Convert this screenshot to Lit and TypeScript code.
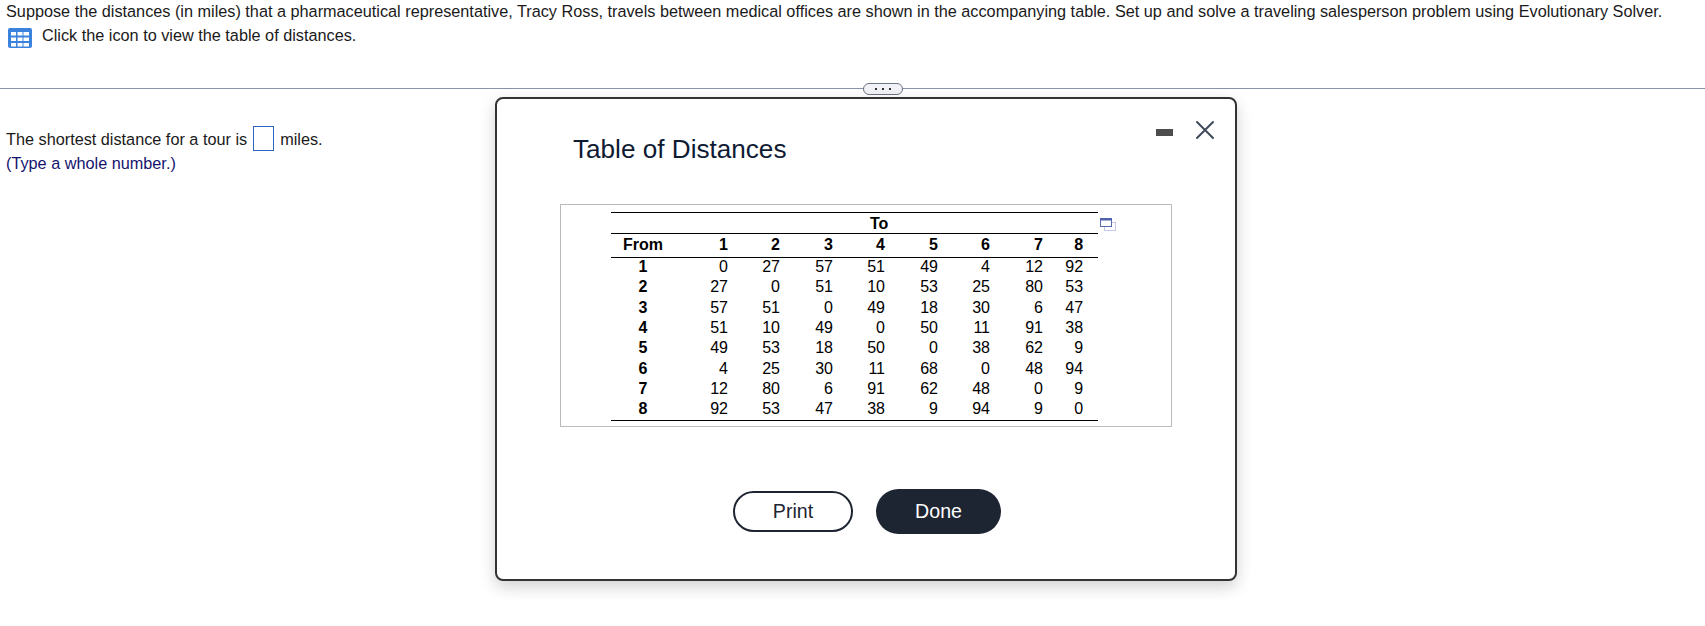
import { LitElement, html, css, svg } from "lit";
import { customElement } from "lit/decorators.js";

const DISTANCES = [
  [0, 27, 57, 51, 49, 4, 12, 92],
  [27, 0, 51, 10, 53, 25, 80, 53],
  [57, 51, 0, 49, 18, 30, 6, 47],
  [51, 10, 49, 0, 50, 11, 91, 38],
  [49, 53, 18, 50, 0, 38, 62, 9],
  [4, 25, 30, 11, 68, 0, 48, 94],
  [12, 80, 6, 91, 62, 48, 0, 9],
  [92, 53, 47, 38, 9, 94, 9, 0],
];

const tableIcon = svg`<svg width="24" height="20" viewBox="0 0 24 20">
  <rect width="24" height="20" rx="2" fill="#3b82dc"/>
  <g fill="#fff">
    <rect x="3" y="4" width="5" height="3.5"/><rect x="9.5" y="4" width="5" height="3.5"/><rect x="15.5" y="4" width="5.5" height="3.5"/>
    <rect x="3" y="9.5" width="5" height="3.5"/><rect x="9.5" y="9.5" width="5" height="3.5"/><rect x="15.5" y="9.5" width="5.5" height="3.5"/>
    <rect x="3" y="15" width="5" height="3.5"/><rect x="9.5" y="15" width="5" height="3.5"/><rect x="15.5" y="15" width="5.5" height="3.5"/>
  </g>
</svg>`;

const popIcon = svg`<svg width="16" height="13" viewBox="0 0 16 13">
  <rect x="4.5" y="4.5" width="11" height="8" fill="#fff" stroke="#c3c9e6"/>
  <rect x="0.5" y="0.5" width="11" height="8" fill="#fff" stroke="#5a6cb0"/>
  <rect x="0" y="0" width="12" height="2.5" fill="#4f62ab"/>
</svg>`;

@customElement("app-root")
export class AppRoot extends LitElement {
  static styles = css`
    :host {
      display: block;
      position: relative;
      height: 626px;
      background: #fff;
      overflow: hidden;
      font-family: "Liberation Sans", Arial, sans-serif;
      font-size: 16.25px;
      color: #1a1a1a;
    }
    .question {
      height: 89px;
      box-sizing: border-box;
      padding: 2px 6px 0;
      border-bottom: 1px solid #8c93a8;
    }
    .question p {
      margin: 0;
      line-height: 18px;
    }
    .icon-line {
      display: flex;
      align-items: flex-start;
      gap: 10px;
      margin-top: 6px;
      line-height: 18px;
    }
    .icon-line svg {
      margin: 2px 0 0 2px;
      display: block;
    }
    .more {
      position: absolute;
      left: 863px;
      top: 83px;
      width: 40px;
      height: 12px;
      box-sizing: border-box;
      border: 1px solid #6d7486;
      border-radius: 6px;
      background: #f1f3f7;
      display: flex;
      align-items: center;
      justify-content: center;
      gap: 5px;
    }
    .more i {
      width: 2px;
      height: 2px;
      background: #333;
    }
    .answer {
      padding: 37px 6px 0;
    }
    .answer-line {
      display: flex;
      align-items: center;
      height: 25px;
      padding-top: 1px;
    }
    .blank {
      align-self: flex-start;
      width: 21px;
      height: 25px;
      box-sizing: border-box;
      border: 1px solid #2f66c4;
      margin: -1px 6px 0;
    }
    .hint {
      color: #14146e;
      margin-top: 1px;
      line-height: 21px;
    }
    .dialog {
      position: absolute;
      left: 495px;
      top: 97px;
      width: 742px;
      height: 484px;
      box-sizing: border-box;
      border: 2px solid #333;
      border-radius: 8px;
      background: #fff;
      box-shadow: 0 6px 16px rgba(0, 0, 0, 0.18);
      padding: 35px 63px 0;
    }
    h2 {
      margin: 0 0 0 13px;
      font-weight: 400;
      font-size: 26.13px;
      line-height: 30px;
      color: #0f1a33;
    }
    .controls {
      position: absolute;
      right: 20.5px;
      top: 20.5px;
      display: flex;
      align-items: center;
      gap: 21.5px;
    }
    .minimize {
      width: 17px;
      height: 7px;
      margin-top: 6px;
      background: #4d4d4d;
    }
    .table-box {
      position: relative;
      margin-top: 40px;
      height: 223px;
      box-sizing: border-box;
      border: 1px solid #bbb;
      padding-top: 7px;
      padding-left: 50px;
    }
    .pop {
      position: absolute;
      left: 539px;
      top: 11px;
      display: block;
    }
    table {
      border-collapse: collapse;
      table-layout: fixed;
      width: 487px;
      color: #000;
      font-size: 16px;
    }
    th, td {
      box-sizing: border-box;
      padding: 0 0 3px;
      height: 20.4px;
      line-height: 17px;
      text-align: right;
      font-weight: 400;
    }
    th {
      font-weight: 700;
    }
    .to th {
      height: 21px;
      padding-bottom: 0;
      border-top: 1px solid #000;
      border-bottom: 1px solid #000;
    }
    .to th:first-child, .to th:nth-child(2) {
      text-align: center;
    }
    .head th {
      height: 24px;
      padding-bottom: 3px;
      border-bottom: 1px solid #000;
    }
    .head th:first-child, tbody th {
      text-align: center;
    }
    tbody tr:last-child > * {
      border-bottom: 1px solid #000;
    }
    .actions {
      display: flex;
      justify-content: center;
      align-items: center;
      gap: 23px;
      margin-top: 62px;
      padding-left: 2px;
    }
    button {
      font: inherit;
      font-size: 19.6px;
      border-radius: 23px;
      box-sizing: border-box;
    }
    .print {
      width: 120px;
      height: 41px;
      background: #fff;
      border: 2px solid #1e2532;
      color: #1e2532;
    }
    .done {
      width: 125px;
      height: 45px;
      background: #1e2532;
      border: 0;
      color: #fff;
    }
  `;

  render() {
    const colWidths = [64, 53, 52, 53, 52, 53, 52, 53, 40, 15];
    return html`
      <section class="question">
        <p>Suppose the distances (in miles) that a pharmaceutical representative, Tracy Ross, travels between medical offices are shown in the accompanying table. Set up and solve a traveling salesperson problem using Evolutionary Solver.</p>
        <div class="icon-line">${tableIcon}<span>Click the icon to view the table of distances.</span></div>
      </section>
      <div class="more"><i></i><i></i><i></i></div>
      <section class="answer">
        <div class="answer-line">The shortest distance for a tour is<span class="blank"></span>miles.</div>
        <div class="hint">(Type a whole number.)</div>
      </section>
      <div class="dialog">
        <h2>Table of Distances</h2>
        <div class="controls">
          <div class="minimize"></div>
          <svg width="20" height="20" viewBox="0 0 20 20"><path d="M2 2L18 18M18 2L2 18" stroke="#3f4a5a" stroke-width="2" stroke-linecap="round"/></svg>
        </div>
        <div class="table-box">
          <table>
            <colgroup>${colWidths.map((w) => html`<col style="width:${w}px">`)}</colgroup>
            <thead>
              <tr class="to"><th></th><th colspan="8">To</th><th></th></tr>
              <tr class="head"><th>From</th>${[1, 2, 3, 4, 5, 6, 7, 8].map((n) => html`<th>${n}</th>`)}<th></th></tr>
            </thead>
            <tbody>
              ${DISTANCES.map((row, i) => html`<tr><th>${i + 1}</th>${row.map((d) => html`<td>${d}</td>`)}<td></td></tr>`)}
            </tbody>
          </table>
          <span class="pop">${popIcon}</span>
        </div>
        <div class="actions">
          <button class="print">Print</button>
          <button class="done">Done</button>
        </div>
      </div>
    `;
  }
}
